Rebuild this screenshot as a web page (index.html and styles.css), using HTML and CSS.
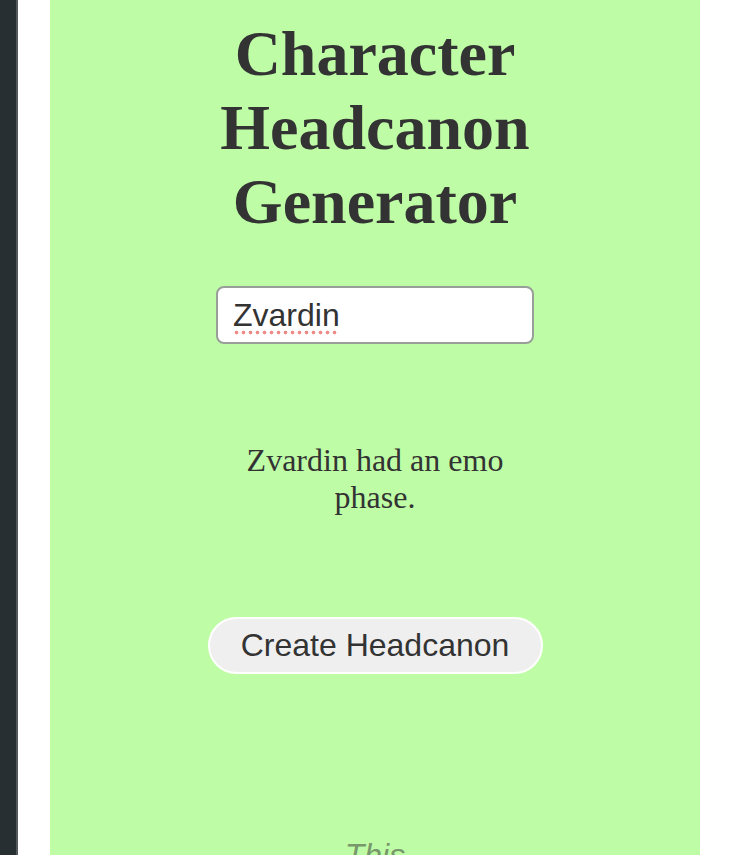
FILE: index.html
```html
<!DOCTYPE html>
<html lang="en">
<head>
<meta charset="utf-8">
<title>Character Headcanon Generator</title>
<link rel="stylesheet" href="styles.css">
</head>
<body>
<div class="sidebar"></div>
<div class="page">
  <main class="card">
    <div class="content">
      <h1 class="title">Character Headcanon Generator</h1>
      <div class="field">
        <input class="name-input" type="text" value="Zvardin" spellcheck="false">
      </div>
      <p class="result">Zvardin had an emo phase.</p>
      <button class="create-btn" type="button">Create Headcanon</button>
      <p class="note">This generator was made for fun.</p>
    </div>
  </main>
</div>
</body>
</html>
```
FILE: styles.css
```css
html, body {
  margin: 0;
  padding: 0;
}

body {
  display: flex;
  min-height: 855px;
  background: #ffffff;
  color: #333333;
  font-family: "Liberation Serif", "Times New Roman", serif;
  overflow: hidden;
}

.sidebar {
  flex: none;
  width: 16px;
  background: #272f33;
  border-right: 2px solid #54595c;
}

.page {
  flex: 1;
  display: flex;
  padding: 0 30px 0 32px;
}

.card {
  width: 650px;
  background: #befda6;
  display: flex;
  flex-direction: column;
  align-items: center;
}

.content {
  width: 320px;
  padding-top: 17px;
  display: flex;
  flex-direction: column;
  align-items: center;
  text-align: center;
}

.title {
  margin: 0;
  font-size: 64px;
  font-weight: bold;
  line-height: normal;
  color: #333333;
}

.field {
  position: relative;
  margin-top: 47px;
}

.field::after {
  content: "";
  position: absolute;
  left: 17px;
  top: 44px;
  width: 106px;
  height: 5px;
  background-image: radial-gradient(circle, #ee8c89 1.6px, rgba(238, 140, 137, 0) 2.2px);
  background-size: 7px 5px;
  background-repeat: repeat-x;
  pointer-events: none;
}

.name-input {
  display: block;
  box-sizing: border-box;
  width: 318px;
  height: 58px;
  margin: 0;
  padding: 0 15px;
  border: 2px solid #9a9e98;
  border-radius: 8px;
  background: #ffffff;
  color: #333333;
  font-family: "Liberation Sans", Arial, sans-serif;
  font-size: 32px;
  outline: none;
}

.result {
  margin: 98px 0 0;
  width: 300px;
  font-size: 32px;
  line-height: 37px;
}

.create-btn {
  box-sizing: border-box;
  width: 335px;
  height: 57px;
  margin-top: 101px;
  padding: 0;
  border: 2px solid #ffffff;
  border-radius: 29px;
  background: #efeff0;
  color: #333333;
  font-family: "Liberation Sans", Arial, sans-serif;
  font-size: 32px;
}

.note {
  margin: 163px 0 0;
  width: 130px;
  font-family: "Liberation Sans", Arial, sans-serif;
  font-style: italic;
  font-size: 32px;
  line-height: normal;
  color: #78986c;
}
```
